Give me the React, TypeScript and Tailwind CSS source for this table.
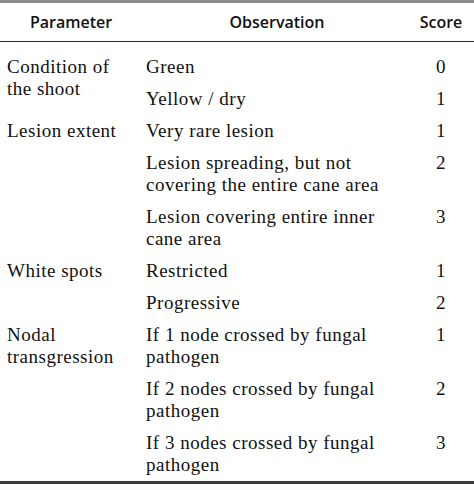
type Row = { obs: string[]; score: number };
type Group = { param: string[]; rows: Row[] };

const groups: Group[] = [
  {
    param: ["Condition of", "the shoot"],
    rows: [
      { obs: ["Green"], score: 0 },
      { obs: ["Yellow / dry"], score: 1 },
    ],
  },
  {
    param: ["Lesion extent"],
    rows: [
      { obs: ["Very rare lesion"], score: 1 },
      { obs: ["Lesion spreading, but not", "covering the entire cane area"], score: 2 },
      { obs: ["Lesion covering entire inner", "cane area"], score: 3 },
    ],
  },
  {
    param: ["White spots"],
    rows: [
      { obs: ["Restricted"], score: 1 },
      { obs: ["Progressive"], score: 2 },
    ],
  },
  {
    param: ["Nodal", "transgression"],
    rows: [
      { obs: ["If 1 node crossed by fungal", "pathogen"], score: 1 },
      { obs: ["If 2 nodes crossed by fungal", "pathogen"], score: 2 },
      { obs: ["If 3 nodes crossed by fungal", "pathogen"], score: 3 },
    ],
  },
];

function Lines({ lines }: { lines: string[] }) {
  return (
    <>
      {lines.map((l, i) => (
        <div key={i} className="whitespace-nowrap">
          {l}
        </div>
      ))}
    </>
  );
}

export default function App() {
  return (
    <div className="w-[474px] h-[484px] bg-white overflow-hidden">
      <div className="border-t-[3px] border-b-[3px] border-t-[#8c8c8c] border-b-[#3c3c3c] h-[484px] flex flex-col">
        <div className="flex h-[39px] items-center border-b border-[#2a2a2a] [font-family:'Open_Sans',sans-serif] font-semibold text-[16px] text-[#111]">
          <div className="w-[142px] text-center">Parameter</div>
          <div className="flex-1 text-center pl-[4px]">Observation</div>
          <div className="w-[66px] text-center">Score</div>
        </div>
        <div className="pt-[9px] [font-family:'Liberation_Serif',serif] text-[19px] tracking-[0.5px] leading-[22px] text-[#111]">
          {groups.map((g, gi) => (
            <div key={gi} className="flex">
              <div className="w-[142px] pl-[7px] py-[5px]">
                <Lines lines={g.param} />
              </div>
              <div className="flex-1 flex flex-col">
                {g.rows.map((r, ri) => (
                  <div key={ri} className="flex">
                    <div className="flex-1 pl-[4px] py-[5px]">
                      <Lines lines={r.obs} />
                    </div>
                    <div className="w-[66px] text-center py-[5px]">{r.score}</div>
                  </div>
                ))}
              </div>
            </div>
          ))}
        </div>
      </div>
    </div>
  );
}
